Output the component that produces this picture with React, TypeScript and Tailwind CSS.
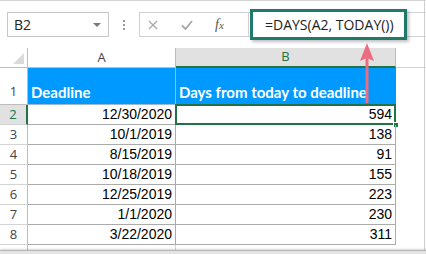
const rows = [
  { n: 2, a: "12/30/2020", b: "594" },
  { n: 3, a: "10/1/2019", b: "138" },
  { n: 4, a: "8/15/2019", b: "91" },
  { n: 5, a: "10/18/2019", b: "155" },
  { n: 6, a: "12/25/2019", b: "223" },
  { n: 7, a: "1/1/2020", b: "230" },
  { n: 8, a: "3/22/2020", b: "311" },
];

const ui = { fontFamily: '"Open Sans", "Noto Sans", sans-serif' };
const cell = { fontFamily: '"Liberation Sans", Arial, sans-serif' };

function Toolbar() {
  return (
    <div className="flex items-start h-[47px] pt-[11px]" style={ui}>
      {/* Name box */}
      <div className="ml-[7px] w-[102px] h-[25px] border border-[#c6c6c6] flex items-center justify-between pl-[6px] pr-[7px]">
        <span className="text-[14px] text-[#222]">B2</span>
        <svg width="8" height="4" viewBox="0 0 8 4">
          <path d="M0 0h8L4 4z" fill="#7a7a7a" />
        </svg>
      </div>
      {/* dots */}
      <div className="w-[30px] h-[25px] flex flex-col items-center justify-center gap-[2px]">
        <span className="w-[2px] h-[2px] bg-[#9a9a9a]" />
        <span className="w-[2px] h-[2px] bg-[#9a9a9a]" />
        <span className="w-[2px] h-[2px] bg-[#9a9a9a]" />
      </div>
      {/* cancel / enter / fx */}
      <div className="w-[110px] h-[25px] border border-[#d0d0d0] flex items-center">
        <svg className="ml-[8px]" width="10" height="10" viewBox="0 0 10 10">
          <path d="M1 1l8 8M9 1l-8 8" stroke="#a8a8a8" strokeWidth="1.3" />
        </svg>
        <svg className="ml-[23px]" width="12" height="10" viewBox="0 0 12 10">
          <path d="M1 5.5l3.5 3.5L11 1" stroke="#a8a8a8" strokeWidth="1.8" fill="none" />
        </svg>
        <span
          className="ml-[22px] text-[14px] italic text-[#555]"
          style={{ fontFamily: '"Liberation Serif", serif' }}
        >
          f<span className="text-[11px]">x</span>
        </span>
      </div>
      {/* formula input */}
      <div className="flex-1 h-[25px] border-y border-[#d4d4d4]" />
    </div>
  );
}

function ColumnHeaders() {
  return (
    <div className="flex h-[20px] text-[13px] text-[#444]" style={ui}>
      <div className="w-[28px] border-r border-b border-[#bcbcbc] relative">
        <svg className="absolute right-[3px] bottom-[3px]" width="11" height="11" viewBox="0 0 11 11">
          <path d="M11 0v11H0z" fill="#dadada" />
        </svg>
      </div>
      <div className="w-[148px] border-r border-b border-[#bcbcbc] flex items-center justify-center">
        A
      </div>
      <div className="w-[220px] bg-[#e1e1e1] border-b-2 border-[#217346] border-r border-r-[#bcbcbc] flex items-center justify-center text-[#217346]">
        B
      </div>
      <div className="flex-1 border-b border-[#d4d4d4]" />
    </div>
  );
}

function TitleRow() {
  return (
    <div className="flex h-[37px]">
      <div
        className="w-[28px] border-r border-b border-[#bcbcbc] flex items-end justify-center pb-[3px] text-[13px] text-[#444]"
        style={ui}
      >
        1
      </div>
      <div
        className="w-[148px] bg-[#0099ff] border-r border-b border-[#9fb9cc] flex items-end pl-[3px] pb-[1px] text-white text-[15px] font-bold"
        style={{ fontFamily: 'Lato, "Open Sans", sans-serif' }}
      >
        Deadline
      </div>
      <div
        className="w-[220px] bg-[#0099ff] border-b border-[#9fb9cc] flex items-end pl-[3px] pb-[1px] text-white text-[15px] font-bold"
        style={{ fontFamily: 'Lato, "Open Sans", sans-serif' }}
      >
        Days from today to deadline
      </div>
      <div className="flex-1" />
    </div>
  );
}

function DataRow({ n, a, b }: { n: number; a: string; b: string }) {
  const active = n === 2;
  return (
    <div className="flex h-[20px]">
      <div
        className={
          "w-[28px] border-b border-[#d4d4d4] flex items-center justify-center text-[13px] " +
          (active
            ? "bg-[#e1e1e1] border-r-2 border-r-[#217346] text-[#217346]"
            : "border-r border-r-[#bcbcbc] text-[#444]")
        }
        style={ui}
      >
        {n}
      </div>
      <div
        className="w-[148px] border-r border-b border-[#ababab] flex items-center justify-end pr-[3px] text-[14px] text-black"
        style={cell}
      >
        {a}
      </div>
      <div
        className="w-[220px] border-r border-b border-[#ababab] flex items-center justify-end pr-[3px] text-[14px] text-black relative"
        style={cell}
      >
        {b}
        {active && (
          <>
            <div className="absolute -left-[1px] -top-[1px] -right-[1px] -bottom-[1px] border-2 border-[#217346]" />
            <div className="absolute -right-[4px] -bottom-[4px] w-[6px] h-[6px] bg-[#217346] border border-white" />
          </>
        )}
      </div>
      <div className="flex-1" />
    </div>
  );
}

export default function App() {
  return (
    <div className="w-[426px] h-[254px] bg-white relative overflow-hidden border-t border-[#d4d4d4]">
      <Toolbar />
      <ColumnHeaders />
      <TitleRow />
      {rows.map((r) => (
        <DataRow key={r.n} {...r} />
      ))}
      <div className="flex h-[20px]">
        <div className="w-[28px] border-r border-[#bcbcbc]" />
        <div className="w-[148px] border-r border-[#d4d4d4]" />
      </div>

      {/* highlighted formula box */}
      <div
        className="absolute left-[250px] top-[8px] w-[157px] h-[31px] border-[3px] border-[#1e7b6c] bg-white flex items-center pl-[12px] text-[14px] text-[#222] shadow-[2px_2px_3px_rgba(0,0,0,0.25)]"
        style={ui}
      >
        =DAYS(A2, TODAY())
      </div>

      {/* red arrow */}
      <svg className="absolute left-[359px] top-[42px]" width="16" height="62" viewBox="0 0 16 62">
        <path d="M8 14V60" stroke="#ec6d80" strokeWidth="3" />
        <path d="M8 0L15 18L8 15L1 18z" fill="#ec6d80" />
      </svg>

      {/* window edges */}
      <div className="absolute right-[1px] top-0 bottom-0 w-[1px] bg-[#cfcfcf]" />
      <div className="absolute left-0 right-0 bottom-0 h-[4px] bg-[#e4e4e4] border-t border-[#b5b5b5] shadow-[0_-1px_2px_rgba(0,0,0,0.15)]" />
    </div>
  );
}
